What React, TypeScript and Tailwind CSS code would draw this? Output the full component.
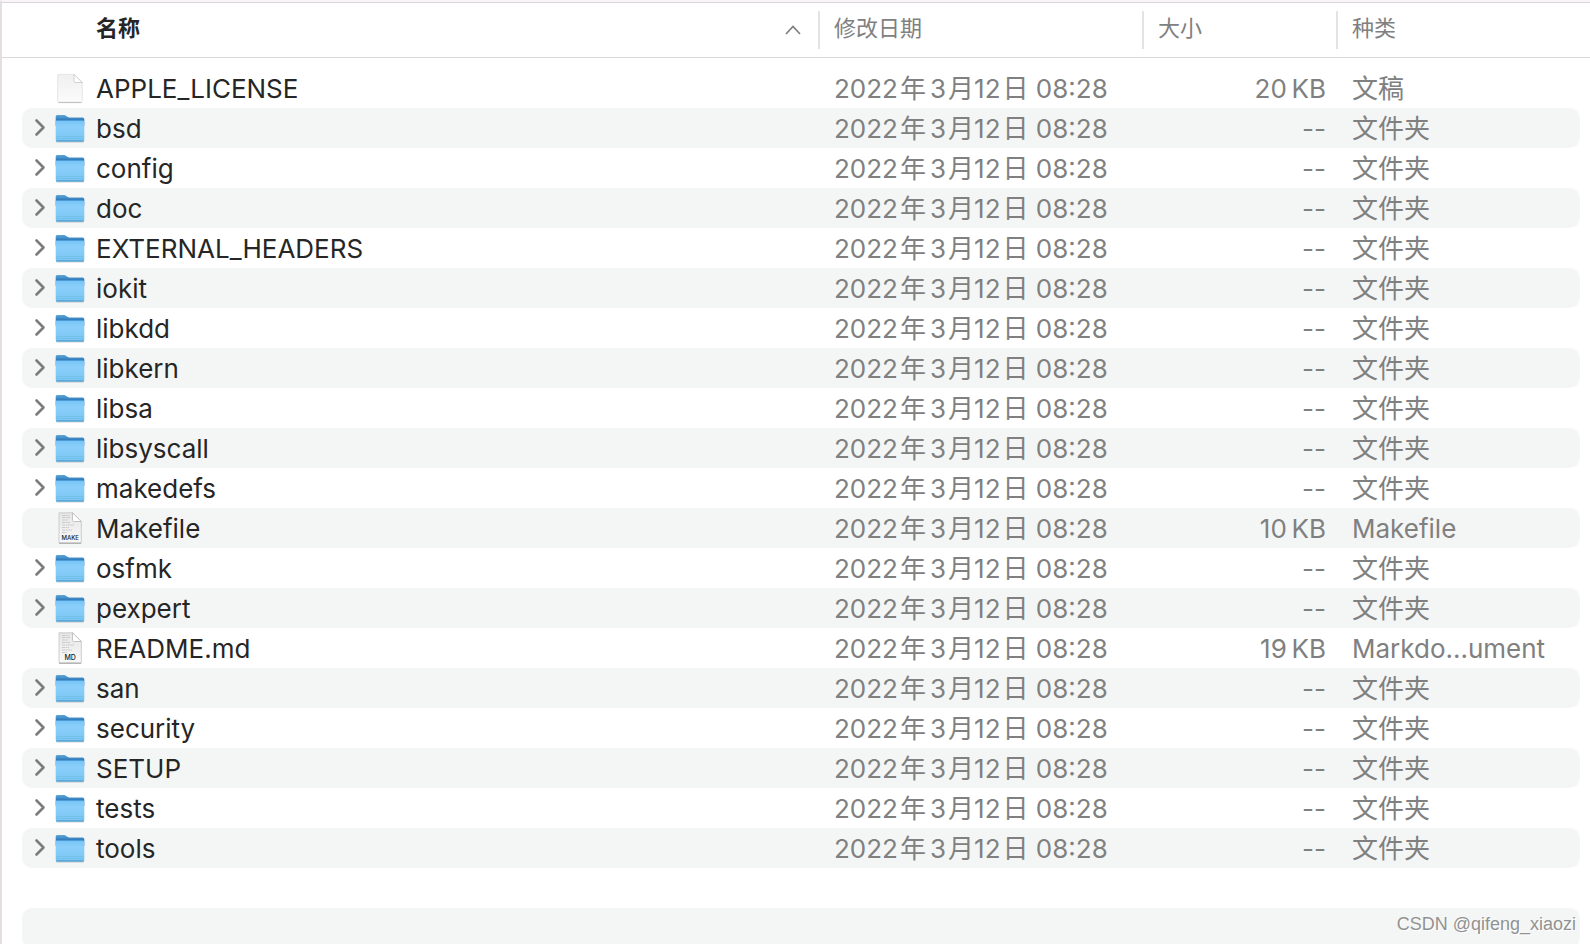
import clsx from "clsx";

type Kind = "folder" | "blank" | "make" | "md";

interface Entry {
  name: string;
  icon: Kind;
  size: string;
  kind: string;
}

const folder = (name: string): Entry => ({
  name,
  icon: "folder",
  size: "--",
  kind: "文件夹",
});

const entries: Entry[] = [
  { name: "APPLE_LICENSE", icon: "blank", size: "20\u2009KB", kind: "文稿" },
  folder("bsd"),
  folder("config"),
  folder("doc"),
  folder("EXTERNAL_HEADERS"),
  folder("iokit"),
  folder("libkdd"),
  folder("libkern"),
  folder("libsa"),
  folder("libsyscall"),
  folder("makedefs"),
  { name: "Makefile", icon: "make", size: "10\u2009KB", kind: "Makefile" },
  folder("osfmk"),
  folder("pexpert"),
  { name: "README.md", icon: "md", size: "19\u2009KB", kind: "Markdo...ument" },
  folder("san"),
  folder("security"),
  folder("SETUP"),
  folder("tests"),
  folder("tools"),
];

function FolderIcon() {
  return (
    <svg width="32" height="32" viewBox="0 0 32 32" aria-hidden="true">
      <defs>
        <linearGradient id="folder-back" x1="0" y1="0" x2="0" y2="1">
          <stop offset="0" stopColor="#5aa6d6" />
          <stop offset="0.3" stopColor="#3f8cc8" />
          <stop offset="0.5" stopColor="#2a72b8" />
          <stop offset="1" stopColor="#2a72b8" />
        </linearGradient>
        <linearGradient id="folder-front" x1="0" y1="0" x2="0" y2="1">
          <stop offset="0" stopColor="#76c4f6" />
          <stop offset="0.3" stopColor="#8acffa" />
          <stop offset="1" stopColor="#7ac5f2" />
        </linearGradient>
      </defs>
      <path d="M2.300 29.800h27.400" stroke="#000" strokeOpacity="0.3" strokeWidth="1" />
      <path
        d="M1.700 4.500Q1.700 3 3.200 3H10q1.200 0 2 .7l1.400 1.100q.8.7 2 .7h13.200Q30.300 5.500 30.300 7V14H1.700z"
        fill="url(#folder-back)"
      />
      <path
        d="M1.700 9.600Q1.700 8.600 2.900 8.600H29.100Q30.300 8.600 30.300 9.600V28Q30.300 29.500 28.800 29.500H3.200Q1.700 29.500 1.700 28z"
        fill="url(#folder-front)"
      />
      <path d="M2 24.500h28M2 26.500h28" stroke="#66b4e2" strokeWidth="0.6" strokeOpacity="0.7" />
      <path d="M2.300 28.900h27.400" stroke="#4d9fd0" strokeWidth="1.200" />
    </svg>
  );
}

function PageIcon({ label }: { label?: string }) {
  return (
    <svg width="32" height="32" viewBox="0 0 32 32" aria-hidden="true">
      <defs>
        <linearGradient id="page" x1="0" y1="0" x2="0" y2="1">
          <stop offset="0" stopColor="#f0f0f0" />
          <stop offset="1" stopColor="#fbfbfb" />
        </linearGradient>
        <linearGradient id="page-tall" x1="0" y1="0" x2="0" y2="1">
          <stop offset="0" stopColor="#e6e6e6" />
          <stop offset="1" stopColor="#f9f9f9" />
        </linearGradient>
      </defs>
      {label ? (
        <>
          <path
            d="M5 .8h13.500L27.300 9.500v20.500Q27.300 31 26.500 31H5.700Q5 31 5 30.300z"
            fill="url(#page-tall)"
            stroke="#c4c4c4"
            strokeWidth="0.8"
          />
          <path d="M5 31.200h22.300" stroke="#a0a0a0" strokeWidth="1" />
          <path
            d="M8 3.500h7M8 5.500h8M8 8h6M8 10.500h8M8 13h12M8 15.500h7M8 18h10M8 20.500h5"
            stroke="#cacaca"
            strokeWidth="1"
            strokeDasharray="3 0.6 1.500 0.4"
          />
          <path d="M18.500 .8V8.500Q18.500 9.500 19.500 9.500h7.800z" fill="#fff" stroke="#b8b8b8" strokeWidth="0.8" />
          <text
            x="16.200"
            y="27.500"
            textAnchor="middle"
            fontSize={label.length > 2 ? 6 : 7}
            fontWeight="500"
            fontFamily="Inter, sans-serif"
            fill="#222"
          >
            {label}
          </text>
        </>
      ) : (
        <>
          <path
            d="M4.500 2.400H20l8.300 8V28.800Q28.300 30.200 26.800 30.200H5Q3.700 30.200 3.700 28.800V3.400Q3.700 2.400 4.500 2.400z"
            fill="url(#page)"
            stroke="#e0e0e0"
            strokeWidth="0.8"
          />
          <path d="M4.500 30.600h23" stroke="#bcbcbc" strokeWidth="1" />
          <path d="M20 2.400V9.500Q20 10.500 21 10.500H28.300z" fill="#fff" stroke="#c8c8c8" strokeWidth="0.8" />
        </>
      )}
    </svg>
  );
}

function EntryIcon({ icon }: { icon: Kind }) {
  if (icon === "folder") return <FolderIcon />;
  if (icon === "make") return <PageIcon label="MAKE" />;
  if (icon === "md") return <PageIcon label="MD" />;
  return <PageIcon />;
}

function ModifiedDate() {
  return (
    <time dateTime="2022-03-12T08:28" className="flex whitespace-pre">
      <span>2022</span>
      <span className="ml-0.5">年</span>
      <span className="ml-1">3</span>
      <span className="ml-0.5">月</span>
      <span>12</span>
      <span className="ml-0.5">日</span>
      <span> 08:28</span>
    </time>
  );
}

function Row({ entry, striped }: { entry: Entry; striped: boolean }) {
  const fill = striped && "bg-[#f4f6f5]";
  return (
    <tr>
      <td className="p-0 pl-5">
        <div className={clsx("flex h-10 items-center rounded-l-[10px]", fill)}>
          <div className="flex w-8 shrink-0 justify-end pr-0.5">
            {entry.icon === "folder" && (
              <button type="button" aria-label={`展开 ${entry.name}`} className="block">
                <svg width="24" height="24" viewBox="0 0 24 24" fill="none" aria-hidden="true">
                  <path
                    d="M8.500 4.500l7 7-7 7"
                    stroke="#7b7d7c"
                    strokeWidth="2.600"
                    strokeLinecap="round"
                    strokeLinejoin="round"
                  />
                </svg>
              </button>
            )}
          </div>
          <EntryIcon icon={entry.icon} />
          <span className="ml-2.5 pt-0.5 text-[#262626]">{entry.name}</span>
        </div>
      </td>
      <td className="p-0">
        <div className={clsx("flex h-10 items-center pt-0.5 pl-4", fill)}>
          <ModifiedDate />
        </div>
      </td>
      <td className="p-0">
        <div className={clsx("flex h-10 items-center justify-end pt-0.5 pr-2.5", fill)}>
          {entry.size}
        </div>
      </td>
      <td className="p-0 pr-2.5">
        <div className={clsx("flex h-10 items-center rounded-r-[10px] pt-0.5 pl-4", fill)}>
          {entry.kind}
        </div>
      </td>
    </tr>
  );
}

const headings = ["修改日期", "大小", "种类"];

export default function App() {
  return (
    <div className="relative h-screen overflow-hidden border-t-2 border-l-2 border-t-[#f8f3f6] border-l-[#e4dee2] bg-white font-['Inter','Noto_Sans_CJK_SC',sans-serif] text-[26px] leading-10 text-[#808080]">
      <table className="w-full table-fixed border-separate border-spacing-0 border-t border-[#d9d7d9]">
        <colgroup>
          <col className="w-[816px]" />
          <col className="w-[324px]" />
          <col className="w-[194px]" />
          <col />
        </colgroup>
        <thead>
          <tr className="text-[22px]">
            <th
              aria-sort="ascending"
              className="h-[55px] border-b border-[#dadada] p-0 text-left"
            >
              <button
                type="button"
                className="flex h-[38px] w-full items-center justify-between pr-4 pl-[94px] font-bold text-[#262626]"
              >
                <span className="pb-1">名称</span>
                <svg width="18" height="18" viewBox="0 0 18 18" fill="none" aria-hidden="true">
                  <path d="M2 13l7-7.500 7 7.500" stroke="#7b7b7b" strokeWidth="1.600" />
                </svg>
              </button>
            </th>
            {headings.map((heading) => (
              <th key={heading} className="h-[55px] border-b border-[#dadada] p-0 text-left font-normal">
                <button
                  type="button"
                  className="flex h-[38px] w-full items-center border-l-2 border-[#e3e3e3] pb-1 pl-3.5"
                >
                  {heading}
                </button>
              </th>
            ))}
          </tr>
        </thead>
        <tbody className="before:block before:h-2.5">
          {entries.map((entry, i) => (
            <Row key={entry.name} entry={entry} striped={i % 2 === 1} />
          ))}
        </tbody>
      </table>
      <div className="mt-10 mr-2.5 ml-5 h-10 rounded-[10px] bg-[#f4f6f5]" />
      <p className="absolute right-3.5 bottom-2 font-['Liberation_Sans',sans-serif] text-[18px] leading-6 text-[#929292] [text-shadow:1px_1px_0_#fff]">
        CSDN @qifeng_xiaozi
      </p>
    </div>
  );
}
